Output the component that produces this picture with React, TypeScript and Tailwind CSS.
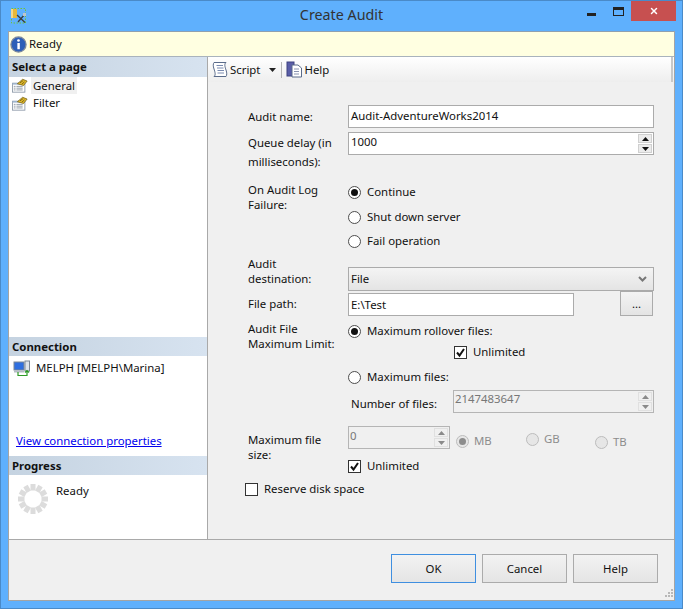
import React from "react";
import { X } from "lucide-react";

function Radio({ on, off }: { on?: boolean; off?: boolean }) {
  return (
    <span className={`flex h-[13px] w-[13px] shrink-0 items-center justify-center rounded-full border ${off ? "border-[#bcbcbc] bg-[#e6e6e6]" : "border-[#4d4d4d] bg-white"}`}>
      {on && <span className={`h-[7px] w-[7px] rounded-full ${off ? "bg-[#8c8c8c]" : "bg-[#111]"}`} />}
    </span>
  );
}

function Check() {
  return (
    <span className="flex h-[13px] w-[13px] shrink-0 items-center justify-center border border-[#333] bg-white">
      <svg width="11" height="11" viewBox="0 0 11 11">
        <path d="M2 5.5 L4.5 8.5 L9 2" fill="none" stroke="#111" strokeWidth="2" />
      </svg>
    </span>
  );
}

function Spin({ disabled }: { disabled?: boolean }) {
  const c = disabled ? "#8a8a8a" : "#111";
  const box = disabled ? "border-[#e0e0e0] bg-[#f0f0f0]" : "border-[#d0d0d0] bg-[#ececec]";
  return (
    <span className="mr-px mt-px flex h-[19px] w-[14px] shrink-0 flex-col gap-px">
      <span className={`flex flex-1 items-center justify-center border ${box}`}>
        <svg width="7" height="4"><path d="M3.5 0 L7 4 H0 Z" fill={c} /></svg>
      </span>
      <span className={`flex flex-1 items-center justify-center border ${box}`}>
        <svg width="7" height="4"><path d="M0 0 H7 L3.5 4 Z" fill={c} /></svg>
      </span>
    </span>
  );
}

function PageIcon() {
  return (
    <svg width="16" height="15" viewBox="0 0 18 16" className="shrink-0">
      <rect x="0.5" y="5.5" width="14" height="10" fill="#fff" stroke="#8d99a8" />
      <path d="M0.5 6 H14" stroke="#9fb4cc" strokeWidth="2" />
      <path d="M2 9 H4 M2 11 H4 M2 13 H4 M5 9 H12 M5 11 H12 M5 13 H12" stroke="#8a94a0" />
      <path d="M6 6 L12 1 L17 3 L13 8 Z" fill="#e0b92a" stroke="#6e5a14" strokeWidth="0.8" />
      <path d="M9 5 L12.5 2.5 M11 6.5 L14 4" stroke="#5c4a10" strokeWidth="0.8" />
    </svg>
  );
}

function Header({ children, h = "h-[19px]" }: { children: React.ReactNode; h?: string }) {
  return (
    <div className={`flex ${h} items-center bg-gradient-to-r from-[#c5d3e1] to-[#d7e3f0] pl-[3px] text-[11.4px] font-bold`}>
      {children}
    </div>
  );
}

function Field({ children, className, disabled }: { children: React.ReactNode; className: string; disabled?: boolean }) {
  return (
    <div className={`flex items-start justify-between border pl-px ${disabled ? "border-[#b5b5b5] bg-[#f0f0f0] text-[#777]" : "border-[#ababab] bg-white"} ${className}`}>
      {children}
    </div>
  );
}

function Spinner() {
  const segs = Array.from({ length: 12 }, (_, i) => i * 30);
  return (
    <svg width="32" height="32" viewBox="0 0 32 32">
      {segs.map((a) => (
        <rect key={a} x="13.5" y="1" width="5" height="6.5" fill="#dcdcdc" transform={`rotate(${a} 16 16)`} />
      ))}
    </svg>
  );
}

export default function App() {
  return (
    <div
      className="flex h-[609px] w-[683px] flex-col overflow-hidden border border-[#4a8ac8] bg-[#5fb0fd] text-[11.4px] text-[#111]"
      style={{ fontFamily: '"Noto Sans", "Open Sans", sans-serif' }}
    >
      {/* title bar */}
      <div className="relative flex h-[30px] shrink-0 items-start">
        <svg width="17" height="17" viewBox="0 0 17 17" className="ml-[9px] mt-[6px] shrink-0">
          <rect x="1.5" y="1.5" width="14" height="14.5" fill="none" stroke="#6cc23c" strokeDasharray="1.5 1.5" />
          <path d="M1 2 H7 V11 H1 Z" fill="#e8b83a" />
          <path d="M1 2 H3 V11 H1 Z" fill="#f5d98a" />
          <path d="M7 8 L15 15.5 M15 7 L8 15" stroke="#3c3c3c" strokeWidth="1.3" />
          <path d="M13 6 H16 V9 H13 Z" fill="#bfc4c9" />
        </svg>
        <div className="flex-1 pr-[26px] pt-[4px] text-center text-[14.3px] leading-[20px] text-[#333]">Create Audit</div>
        <div className="absolute left-[586px] top-[12px] h-[3px] w-[9px] bg-[#222]" />
        <div className="absolute left-[612px] top-[6px] h-[9px] w-[11px] border border-t-[3px] border-[#222]" />
        <div className="absolute right-[6px] top-0 flex h-[20px] w-[45px] items-center justify-center bg-[#c75050]">
          <X size={10} strokeWidth={3.6} className="text-white" />
        </div>
      </div>

      {/* client area */}
      <div className="mx-[7px] flex h-[570px] flex-col border border-t-0 border-[#a4a4a4] bg-[#f0f0f0]">
        <div className="flex h-[26px] shrink-0 items-center gap-[2px] border-y border-[#a9b3bd] border-t-[#8fa0b0] bg-[#ffffe1] pl-[1px]">
          <svg width="17" height="17" viewBox="0 0 18 18">
            <circle cx="9" cy="9" r="8" fill="#2c5fb8" stroke="#7d8a9c" strokeWidth="1.4" />
            <circle cx="9" cy="4.8" r="1.4" fill="#fff" />
            <rect x="7.8" y="7.4" width="2.6" height="6.6" fill="#fff" />
          </svg>
          <span>Ready</span>
        </div>

        <div className="flex h-[483px] shrink-0 border-b border-[#a9a9a9]">
          {/* left pane */}
          <div className="flex w-[199px] shrink-0 flex-col border-r border-[#a9a9a9] bg-white">
            <Header h="h-[20px]">Select a page</Header>
            <div className="flex h-[260px] flex-col pl-[3px]">
              <div className="mt-[-1px] flex h-[18px] items-center gap-[3px]">
                <PageIcon />
                <span className="bg-[#f0f0f0] px-[2px] leading-[17px]">General</span>
              </div>
              <div className="flex h-[18px] items-center gap-[3px]">
                <PageIcon />
                <span className="px-[2px]">Filter</span>
              </div>
            </div>
            <Header>Connection</Header>
            <div className="flex h-[100px] flex-col pl-[4px]">
              <div className="mt-[2px] flex h-[20px] items-center gap-[5px]">
                <svg width="18" height="17" viewBox="0 0 18 17" className="shrink-0">
                  <rect x="1" y="2" width="10" height="8" fill="#2f6fe0" stroke="#7c8794" />
                  <rect x="12" y="1" width="4.5" height="10" fill="#dfe4ea" stroke="#7c8794" />
                  <rect x="1" y="10.5" width="10" height="2" fill="#b5bcc6" />
                  <path d="M5 12 V15.5 H14 V11 M12 12.5 L14 10.5 L16 12.5" fill="none" stroke="#2e9a26" strokeWidth="1.2" />
                </svg>
                <span>MELPH [MELPH\Marina]</span>
              </div>
              <a className="ml-[3px] mt-[53px] leading-[20px] text-[#0000ee] underline">View connection properties</a>
            </div>
            <Header>Progress</Header>
            <div className="flex flex-1 items-start pl-[8px] pt-[8px]">
              <Spinner />
              <span className="ml-[7px] mt-[-1px]">Ready</span>
            </div>
          </div>

          {/* right pane */}
          <div className="flex min-w-0 flex-1 flex-col">
            <div className="flex h-[25px] shrink-0 items-center bg-gradient-to-b from-white to-[#eeeeee] pl-[3px] pr-px">
              <svg width="18" height="17" viewBox="0 0 18 17" className="shrink-0">
                <path d="M3 1.5 H15 C13 3 14 6 15 9 C16 12 16 14 15 15.5 H3 C5 14 4 11 3 8 C2 5 2 3 3 1.5 Z" fill="#fff" stroke="#5a6b8a" />
                <path d="M5.5 4.5 H12 M6 7 H12.5 M6.5 9.5 H13 M6.5 12 H13" stroke="#7a8bb0" />
              </svg>
              <span className="ml-[1px]">Script</span>
              <svg width="7" height="4" className="ml-[9px] shrink-0"><path d="M0 0 H7 L3.5 4 Z" fill="#222" /></svg>
              <span className="ml-[5px] h-[16px] w-px bg-[#b5b5b5]" />
              <svg width="18" height="17" viewBox="0 0 18 17" className="ml-[4px] shrink-0">
                <rect x="1" y="1" width="7" height="14" fill="#5a5ea8" stroke="#3e4280" />
                <path d="M6 4 H12 L15.5 7 V16 H6 Z" fill="#fff" stroke="#5a6b8a" />
                <path d="M8 8 H13 M8 10.5 H13 M8 13 H13" stroke="#8a94b0" />
              </svg>
              <span>Help</span>
              <span className="ml-auto h-full w-[2px] bg-[#c8c8c8]" />
            </div>

            <div className="flex flex-col pl-[40px]">
              <div className="mt-[23px] flex h-[23px] items-center">
                <div className="w-[100px] shrink-0">Audit name:</div>
                <Field className="h-[23px] w-[306px]"><span className="leading-[19px] pl-px">Audit-AdventureWorks2014</span></Field>
              </div>
              <div className="mt-[4px] flex h-[40px] items-start">
                <div className="w-[100px] shrink-0 pr-[6px] pt-px leading-[19px]">Queue delay (in milliseconds):</div>
                <Field className="h-[23px] w-[306px]"><span className="leading-[18px] pl-px">1000</span><Spin /></Field>
              </div>

              <div className="mt-[10px] flex items-start">
                <div className="w-[100px] shrink-0 leading-[15px]">On Audit Log<br />Failure:</div>
                <div className="flex flex-col">
                  <div className="flex h-[20px] items-center gap-[6px]"><Radio on /><span>Continue</span></div>
                  <div className="mt-[5px] flex h-[20px] items-center gap-[6px]"><Radio /><span>Shut down server</span></div>
                  <div className="mt-[4px] flex h-[20px] items-center gap-[6px]"><Radio /><span>Fail operation</span></div>
                </div>
              </div>

              <div className="mt-[5px] flex h-[35px] items-start">
                <div className="w-[100px] shrink-0 leading-[15px]">Audit<br />destination:</div>
                <div className="mt-[11px] flex h-[24px] w-[306px] items-center justify-between border border-[#ababab] bg-gradient-to-b from-[#f4f4f4] to-[#e4e4e4] pl-[2px] pr-[6px]">
                  <span>File</span>
                  <svg width="9" height="6"><path d="M1 1 L4.5 4.5 L8 1" fill="none" stroke="#777" strokeWidth="2" /></svg>
                </div>
              </div>

              <div className="flex h-[26px] items-start">
                <div className="w-[100px] shrink-0 pt-[4px]">File path:</div>
                <Field className="mt-[2px] h-[23px] w-[226px]"><span className="leading-[21px] pl-px">E:\Test</span></Field>
                <div className="ml-[46px] flex h-[25px] w-[33px] items-center justify-center border border-[#ababab] bg-gradient-to-b from-[#f4f4f4] to-[#e4e4e4]">...</div>
              </div>

              <div className="mt-[4px] flex items-start">
                <div className="w-[100px] shrink-0 leading-[15px]">Audit File<br />Maximum Limit:</div>
                <div className="flex flex-col">
                  <div className="flex h-[20px] items-center gap-[6px]"><Radio on /><span>Maximum rollover files:</span></div>
                  <div className="mt-[1px] flex h-[20px] items-center gap-[6px] pl-[106px]"><Check /><span>Unlimited</span></div>
                  <div className="mt-[5px] flex h-[20px] items-center gap-[6px]"><Radio /><span>Maximum files:</span></div>
                  <div className="mt-[3px] flex h-[23px] items-center">
                    <span className="ml-[3px] mt-[4px] w-[102px]">Number of files:</span>
                    <Field disabled className="h-[23px] w-[201px]"><span className="leading-[16px]">2147483647</span><Spin disabled /></Field>
                  </div>
                </div>
              </div>

              <div className="mt-[13px] flex h-[36px] items-start">
                <div className="w-[100px] shrink-0 pt-[6px] leading-[15px]">Maximum file<br />size:</div>
                <Field disabled className="h-[23px] w-[102px]"><span className="leading-[17px]">0</span><Spin disabled /></Field>
                <div className="ml-[6px] mt-[7px] flex h-[16px] w-[70px] items-center gap-[5px] text-[#8c8c8c]"><Radio on off /><span>MB</span></div>
                <div className="mt-[5px] flex h-[16px] w-[69px] items-center gap-[5px] text-[#8c8c8c]"><Radio off /><span>GB</span></div>
                <div className="mt-[8px] flex h-[16px] items-center gap-[5px] text-[#8c8c8c]"><Radio off /><span>TB</span></div>
              </div>

              <div className="ml-[100px] mt-[-6px] flex h-[20px] items-center gap-[6px]"><Check /><span>Unlimited</span></div>
              <div className="ml-[-3px] mt-[3px] flex h-[20px] items-center gap-[6px]">
                <span className="h-[13px] w-[13px] border border-[#333] bg-white" />
                <span>Reserve disk space</span>
              </div>
            </div>
          </div>
        </div>

        {/* buttons */}
        <div className="relative flex flex-1 items-start justify-end gap-[6px] pr-[16px] pt-[14px]">
          <button className="h-[29px] w-[85px] border border-[#3f8fe0] bg-gradient-to-b from-[#f2f2f2] to-[#e5e5e5]">OK</button>
          <button className="h-[29px] w-[85px] border border-[#ababab] bg-gradient-to-b from-[#f2f2f2] to-[#e5e5e5]">Cancel</button>
          <button className="h-[29px] w-[85px] border border-[#ababab] bg-gradient-to-b from-[#f2f2f2] to-[#e5e5e5]">Help</button>
          <svg width="10" height="10" className="absolute bottom-[2px] right-[1px]">
            <path d="M8 1h2v2H8zM5 4h2v2H5zM8 4h2v2H8zM2 7h2v2H2zM5 7h2v2H5zM8 7h2v2H8z" fill="#b8b8b8" />
          </svg>
        </div>
      </div>
    </div>
  );
}
